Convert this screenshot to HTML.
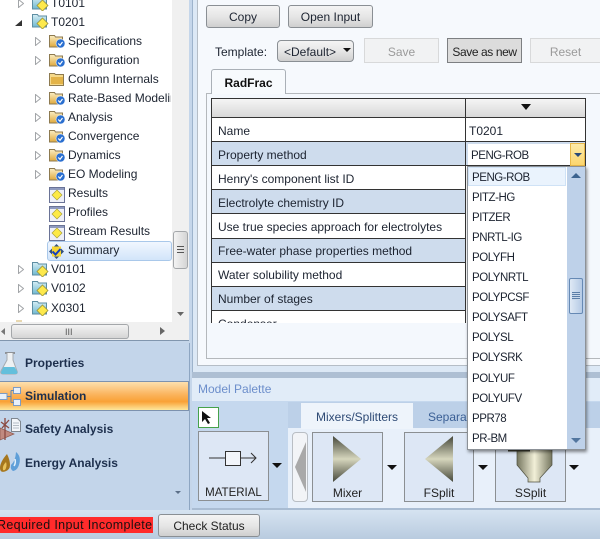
<!DOCTYPE html>
<html><head><meta charset="utf-8"><style>
html,body{margin:0;padding:0}
body{width:600px;height:539px;overflow:hidden;position:relative;background:#c5d6ea;font-family:"Liberation Sans",sans-serif;font-size:12px;color:#1c2330}
div,span,svg{position:absolute;box-sizing:border-box}
.t{white-space:nowrap;line-height:16px;height:16px}
.btn{border:1px solid #8a8f94;border-radius:3px;background:linear-gradient(#f4f4f4,#e6e6e6 50%,#cfcfcf);text-align:center;line-height:22px;height:23px}
.dis{border:1px solid #d8d9da;background:#f1f2f3;color:#9a9a9a;text-align:center;line-height:26px;height:25px}
.row{left:212px;width:253px;height:24px;border-bottom:1px solid #333;line-height:25px;padding-left:6px;white-space:nowrap}
.b{background:#cedced}
.w{background:#fff}
.it{left:472px;width:92px;height:20px;line-height:22px;white-space:nowrap;font-size:11.500px;letter-spacing:-.45px}
.nav{left:25px;font-weight:bold;color:#1d2f4d;line-height:16px;white-space:nowrap}
.pal{background:#dde7f5;border:1px solid #8b8f92;height:70px;text-align:center;color:#222}
</style></head><body>
<svg width="0" height="0" style="left:0;top:0"><defs>
<linearGradient id="fo" x1="0" x2="0" y1="0" y2="1"><stop offset="0" stop-color="#fbeec4"/><stop offset="1" stop-color="#dfa93c"/></linearGradient>
<linearGradient id="fb" x1="0" x2="0" y1="0" y2="1"><stop offset="0" stop-color="#d6eef5"/><stop offset="1" stop-color="#6fb8cf"/></linearGradient>
<symbol id="cf" viewBox="0 0 18 16"><path d="M.5 2.500h5l1 1.500h7v10H.5z" fill="url(#fo)" stroke="#8d7a50"/><circle cx="11.500" cy="10.500" r="4.500" fill="#2a6fd0" stroke="#fff" stroke-width=".5"/><path d="M9.300 10.500l1.700 1.800 2.500-3.300" stroke="#fff" stroke-width="1.200" fill="none"/></symbol>
<symbol id="bf" viewBox="0 0 18 16"><path d="M.5 1.500h5l1 1.500h8v11H.5z" fill="url(#fb)" stroke="#5e8ea3"/><path d="M10.500 5l5.500 5.500-5.500 5.500-5.500-5.500z" fill="#fde94c" stroke="#9b9439" stroke-width=".8"/></symbol>
<symbol id="dc" viewBox="0 0 16 16"><rect x=".5" y=".5" width="15" height="15" fill="#eef0f8" stroke="#6a7396"/><rect x="1" y="1" width="14" height="2" fill="#8f9bc0"/><path d="M8 3l5 5-5 5-5-5z" fill="#fdea45" stroke="#aaa23a" stroke-width=".7"/></symbol>
<symbol id="tri" viewBox="0 0 6 9"><path d="M.5.5L5.500 4.500.5 8.500z" fill="#fff" stroke="#a2a5a8"/></symbol>
</defs></svg>

<!-- tree -->
<div style="left:0;top:0;width:189px;height:341px;background:#fff;border-bottom:2px solid #8196ae;border-right:1px solid #8196ae"></div>
<div style="left:172px;top:0;width:17px;height:340px;background:#f0f0f0"></div>
<div style="left:0;top:322px;width:189px;height:18px;background:#f0f0f0"></div>
<div style="left:173px;top:231px;width:15px;height:38px;border:1px solid #a4a7aa;border-radius:3px;background:linear-gradient(90deg,#f3f3f3,#d5d5d5)"></div>
<div style="left:177px;top:246px;width:7px;height:7px;border-top:1px solid #555;border-bottom:1px solid #555"></div>
<div style="left:177px;top:249px;width:7px;height:1px;background:#555"></div>
<svg style="left:176px;top:312px" width="9" height="5"><path d="M1 0h7L4.500 4z" fill="#666"/></svg>
<div style="left:11px;top:324px;width:118px;height:15px;border:1px solid #a4a7aa;border-radius:3px;background:linear-gradient(#f3f3f3,#d5d5d5)"></div>
<div class="t" style="left:65px;top:324px;font-size:9px;color:#555">III</div>
<svg style="left:1px;top:328px" width="5" height="8"><path d="M4 0v7L0 3.500z" fill="#777"/></svg>
<svg style="left:160px;top:327px" width="5" height="8"><path d="M0 0v8l5-4z" fill="#666"/></svg>
<div style="left:47px;top:241px;width:125px;height:20px;border:1px solid #a9c8ea;border-radius:3px;background:linear-gradient(#f1f7fe,#d2e5fa)"></div>

<svg style="left:18px;top:-1px" width="6" height="9"><use href="#tri"/></svg><svg style="left:32px;top:-5px" width="18" height="16"><use href="#bf"/></svg><div class="t" style="left:51px;top:-5px">T0101</div>
<svg style="left:15px;top:20px" width="8" height="6"><path d="M7 0v6H0z" fill="#333"/></svg><svg style="left:32px;top:13px" width="18" height="16"><use href="#bf"/></svg><div class="t" style="left:51px;top:14px">T0201</div>

<svg style="left:35px;top:37px" width="6" height="9"><use href="#tri"/></svg><svg style="left:49px;top:33px" width="18" height="16"><use href="#cf"/></svg><div class="t" style="left:68px;top:33px">Specifications</div>
<svg style="left:35px;top:56px" width="6" height="9"><use href="#tri"/></svg><svg style="left:49px;top:52px" width="18" height="16"><use href="#cf"/></svg><div class="t" style="left:68px;top:52px">Configuration</div>
<svg style="left:49px;top:72px" width="16" height="15"><path d="M.5 1.500h5l1 1h8v11H.5z" fill="#f5d98a" stroke="#8d7a50"/><path d="M2 5h12v7H2z" fill="#e3b348"/></svg><div class="t" style="left:68px;top:71px">Column Internals</div>
<svg style="left:35px;top:94px" width="6" height="9"><use href="#tri"/></svg><svg style="left:49px;top:90px" width="18" height="16"><use href="#cf"/></svg><div class="t" style="left:68px;top:90px;width:103px;overflow:hidden">Rate-Based Modeling</div>
<svg style="left:35px;top:113px" width="6" height="9"><use href="#tri"/></svg><svg style="left:49px;top:109px" width="18" height="16"><use href="#cf"/></svg><div class="t" style="left:68px;top:109px">Analysis</div>
<svg style="left:35px;top:132px" width="6" height="9"><use href="#tri"/></svg><svg style="left:49px;top:128px" width="18" height="16"><use href="#cf"/></svg><div class="t" style="left:68px;top:128px">Convergence</div>
<svg style="left:35px;top:151px" width="6" height="9"><use href="#tri"/></svg><svg style="left:49px;top:147px" width="18" height="16"><use href="#cf"/></svg><div class="t" style="left:68px;top:147px">Dynamics</div>
<svg style="left:35px;top:170px" width="6" height="9"><use href="#tri"/></svg><svg style="left:49px;top:166px" width="18" height="16"><use href="#cf"/></svg><div class="t" style="left:68px;top:166px">EO Modeling</div>
<svg style="left:49px;top:187px" width="16" height="16"><use href="#dc"/></svg><div class="t" style="left:68px;top:185px">Results</div>
<svg style="left:49px;top:206px" width="16" height="16"><use href="#dc"/></svg><div class="t" style="left:68px;top:204px">Profiles</div>
<svg style="left:49px;top:225px" width="16" height="16"><use href="#dc"/></svg><div class="t" style="left:68px;top:223px">Stream Results</div>
<svg style="left:49px;top:244px" width="16" height="16"><path d="M7.500 0l7.500 7.500-7.500 7.500L0 7.500z" fill="#33517f"/><rect x="3" y="2.500" width="9" height="10" fill="#f6d533"/><path d="M3.500 7.500l3 3 5-5.500" stroke="#1540c0" stroke-width="2" fill="none"/></svg><div class="t" style="left:68px;top:242px">Summary</div>
<svg style="left:18px;top:265px" width="6" height="9"><use href="#tri"/></svg><svg style="left:32px;top:261px" width="18" height="16"><use href="#bf"/></svg><div class="t" style="left:51px;top:261px">V0101</div>
<svg style="left:18px;top:284px" width="6" height="9"><use href="#tri"/></svg><svg style="left:32px;top:280px" width="18" height="16"><use href="#bf"/></svg><div class="t" style="left:51px;top:280px">V0102</div>
<svg style="left:18px;top:304px" width="6" height="9"><use href="#tri"/></svg><svg style="left:32px;top:300px" width="18" height="16"><use href="#bf"/></svg><div class="t" style="left:51px;top:300px">X0301</div>
<div style="left:16px;top:320px;width:6px;height:2px;background:#e8d8b0"></div>

<!-- nav -->
<div style="left:0;top:343px;width:190px;height:167px;background:#c3d5ea;border-right:1px solid #8ea6c2"></div>
<svg style="left:0;top:351px" width="20" height="24"><path d="M5 2h10" stroke="#8e9297" stroke-width="2"/><path d="M7 2v7L1 20q-1 3 2 3h12q3 0 2-3L13 9V2" fill="#eef1f3" stroke="#a6abb0"/><path d="M3.500 16h11l3 5q0 2-2 2H3q-2 0-2-2z" fill="#63bfdc"/></svg>
<div class="nav" style="left:25px;top:355px">Properties</div>
<div style="left:0;top:381px;width:189px;height:30px;background:linear-gradient(#fde0ae,#fbb35c 45%,#f9a136 70%,#fde79c);border:1px solid #7d92ae;border-left:0"></div>
<svg style="left:0;top:387px" width="22" height="20"><rect x="-2" y="6.500" width="9" height="6" fill="#e8f0fa" stroke="#7d9cc4"/><rect x="13.500" y=".5" width="7" height="6" fill="#e8f0fa" stroke="#7d9cc4"/><rect x="13.500" y="12.500" width="7" height="6" fill="#e8f0fa" stroke="#7d9cc4"/><path d="M7 9.500h4M11 3.500h3M11 15.500h3M11 3.500v12" stroke="#5f86b5" fill="none"/></svg>
<div class="nav" style="left:25px;top:388px">Simulation</div>
<svg style="left:0;top:417px" width="23" height="24"><path d="M11.500 1.500h6l3 3v10h-9z" fill="#f4f6fa" stroke="#7f8790"/><path d="M13 6h6M13 8.500h6M13 11h6" stroke="#b5bcc5"/><path d="M0 11l14 6L0 23z" fill="#c08a80" stroke="#8f5a50" stroke-width=".7"/><path d="M5 1v22M1 5l8 6M9 3l-7 8" stroke="#8a4a42" stroke-width="1.300" fill="none"/></svg>
<div class="nav" style="left:25px;top:421px">Safety Analysis</div>
<svg style="left:0;top:452px" width="21" height="21"><path d="M7 2q3 6 3 11t-5 6.500-5-3.500q0-6 7-14z" fill="#a6771e"/><path d="M6 10q1 3 0 6t-3 2q-1-4 3-8z" fill="#e8c25c"/><path d="M16 0q5 4 3.500 11t-6 8q-3.500-1-2.500-6 4.500-4 5-13z" fill="#5f9fd8"/><path d="M15 7q1 4-1 7" stroke="#e2f0fb" stroke-width="1.500" fill="none"/></svg>
<div class="nav" style="left:25px;top:455px">Energy Analysis</div>
<svg style="left:175px;top:491px" width="7" height="4"><path d="M0 0h6L3 3z" fill="#5c6f88"/></svg>

<!-- status -->
<div style="left:0;top:510px;width:600px;height:29px;background:linear-gradient(#d6e3f1,#b9cbdf)"></div>
<div class="t" style="left:0;top:517px;width:153px;height:16px;background:#ff2b2b;color:#1a1010;font-size:12.500px;letter-spacing:.35px;text-indent:-3px;overflow:hidden">Required Input Incomplete</div>
<div class="btn" style="left:158px;top:514px;width:102px;height:23px;color:#222">Check Status</div>

<!-- right form -->
<div style="left:192px;top:0;width:408px;height:372px;background:#dce8f5;border-left:1px solid #9db3cc"></div>
<div style="left:197px;top:0;width:403px;height:366px;background:#f6f9fd;border:1px solid #b5bdc6;border-top:0;border-right:0"></div>
<div class="btn" style="left:206px;top:5px;width:74px;height:23px">Copy</div>
<div class="btn" style="left:288px;top:5px;width:85px;height:23px">Open Input</div>
<div class="t" style="left:215px;top:44px">Template:</div>
<div class="btn" style="left:277px;top:40px;width:77px;height:22px;text-align:left;padding-left:6px;line-height:22px;border-radius:4px">&lt;Default&gt;</div>
<svg style="left:343px;top:48px" width="8" height="5"><path d="M0 0h8L4 4z" fill="#111"/></svg>
<div class="dis" style="left:364px;top:38px;width:75px">Save</div>
<div class="dis" style="left:447px;top:38px;width:75px;background:#dcdcdc;border-color:#7d7f82;color:#222;letter-spacing:-.4px">Save as new</div>
<div class="dis" style="left:530px;top:38px;width:70px;border-right:0">Reset</div>
<div style="left:206px;top:93px;width:394px;height:266px;border:1px solid #b4b8bc;border-right:0;background:#f4f8fd"></div>
<div style="left:211px;top:69px;width:75px;height:25px;background:#f7fafd;border:1px solid #aab0b7;border-bottom:0;border-radius:3px 3px 0 0;font-weight:bold;text-align:center;line-height:27px;color:#111;font-size:12px">RadFrac</div>

<!-- grid -->
<div style="left:211px;top:98px;width:375px;height:226px;background:#fff;border:1px solid #333;border-bottom:0;overflow:hidden"></div>
<div style="left:212px;top:99px;width:253px;height:19px;background:linear-gradient(#f5f5f5,#d8d8d8);border-bottom:1px solid #333"></div>
<div style="left:466px;top:99px;width:119px;height:19px;background:linear-gradient(#f5f5f5,#d8d8d8);border-bottom:1px solid #333"></div>
<svg style="left:521px;top:104px" width="10" height="7"><path d="M0 0h10L5 6z" fill="#111"/></svg>
<div class="row w" style="top:118px;line-height:27px">Name</div>
<div class="row b" style="top:142px;line-height:27px">Property method</div>
<div class="row w" style="top:166px;line-height:27px">Henry's component list ID</div>
<div class="row b" style="top:190px;line-height:27px">Electrolyte chemistry ID</div>
<div class="row w" style="top:214px;height:25px;line-height:27px">Use true species approach for electrolytes</div>
<div class="row b" style="top:239px">Free-water phase properties method</div>
<div class="row w" style="top:263px">Water solubility method</div>
<div class="row b" style="top:287px">Number of stages</div>
<div style="left:212px;top:311px;width:253px;height:12px;background:#fff;overflow:hidden;padding-left:6px;line-height:26px">Condenser</div>
<div style="left:465px;top:99px;width:1px;height:224px;background:#333"></div>
<div style="left:466px;top:118px;width:119px;height:24px;background:#fff;border-bottom:1px solid #333;padding-left:3px;line-height:27px">T0201</div>
<div style="left:466px;top:142px;width:119px;height:24px;background:#cedced;border-bottom:1px solid #333"></div>
<div style="left:468px;top:144px;width:102px;height:21px;background:#fff;padding-left:3px;line-height:25px;font-size:11.500px;letter-spacing:-.45px">PENG-ROB</div>
<div style="left:570px;top:143px;width:15px;height:23px;background:linear-gradient(#fdeaa8,#fcd66e);border:1px solid #e8b84a"></div>
<svg style="left:574px;top:153px" width="8" height="4"><path d="M0 0h8L4 4z" fill="#2a4a78"/></svg>
<div style="left:211px;top:323px;width:255px;height:35px;background:#f4f8fd"></div>

<!-- palette -->
<div style="left:192px;top:372px;width:408px;height:6px;background:#aebfd3"></div>
<div style="left:192px;top:378px;width:408px;height:132px;background:#c5d8ee;border-bottom:2px solid #a9bcd2"></div>
<div style="left:192px;top:378px;width:408px;height:23px;background:#e1ecf8"></div>
<div class="t" style="left:198px;top:381px;color:#6c8ecb">Model Palette</div>
<div style="left:198px;top:407px;width:21px;height:21px;background:#fff;border:1px solid #46a24a"></div>
<svg style="left:201px;top:410px" width="14" height="15"><path d="M1 1v11l3-3 3 5 2-1-3-5h4z" fill="#111"/></svg>
<div class="pal" style="left:198px;top:431px;width:71px;padding-top:52px;line-height:18px;font-size:11.500px">MATERIAL</div>
<svg style="left:209px;top:449px" width="48" height="20"><path d="M0 9h16M31 9h16M42 4l5 5-5 5" stroke="#333" fill="none"/><rect x="16.500" y="2.500" width="15" height="14" fill="#f2f5fa" stroke="#333"/></svg>
<svg style="left:272px;top:463px" width="10" height="6"><path d="M0 0h10L5 5z" fill="#111"/></svg>
<div style="left:288px;top:402px;width:312px;height:106px;background:#bcd0e8"></div>
<div style="left:288px;top:428px;width:312px;height:80px;background:#e8f0fa"></div>
<div style="left:301px;top:403px;width:112px;height:26px;background:#eef4fb;text-align:center;line-height:28px;color:#2e4a75">Mixers/Splitters</div>
<div class="t" style="left:428px;top:409px;color:#3a5f95">Separators</div>
<div style="left:292px;top:432px;width:16px;height:70px;background:#f2f4f7;border:1px solid #b9bec4;border-radius:4px"></div>
<svg style="left:295px;top:442px" width="11" height="50"><path d="M11 0v50L0 25z" fill="#a9a9a9"/></svg>
<div class="pal" style="left:312px;top:432px;width:71px;padding-top:52px;line-height:17px">Mixer</div>
<svg style="left:332px;top:435px" width="30" height="48"><defs><linearGradient id="m" x1="0" x2="0" y1="0" y2="1"><stop offset="0" stop-color="#45473a"/><stop offset=".5" stop-color="#d6d6bd"/><stop offset="1" stop-color="#45473a"/></linearGradient><linearGradient id="s" x1="0" x2="1" y1="0" y2="0"><stop offset="0" stop-color="#75765f"/><stop offset=".5" stop-color="#f2f0d8"/><stop offset="1" stop-color="#75765f"/></linearGradient></defs><path d="M1 1v46l28-23z" fill="url(#m)"/></svg>
<svg style="left:387px;top:465px" width="10" height="6"><path d="M0 0h10L5 5z" fill="#111"/></svg>
<div class="pal" style="left:404px;top:432px;width:70px;padding-top:52px;line-height:17px">FSplit</div>
<svg style="left:424px;top:435px" width="30" height="48"><path d="M29 1v46L1 24z" fill="url(#m)"/></svg>
<svg style="left:478px;top:465px" width="10" height="6"><path d="M0 0h10L5 5z" fill="#111"/></svg>
<div class="pal" style="left:495px;top:432px;width:71px;padding-top:52px;line-height:17px">SSplit</div>
<svg style="left:506px;top:440px" width="48" height="44"><path d="M11 0h35v25L34 38v4H22v-4L11 25z" fill="url(#s)" stroke="#4f5040" stroke-width=".7"/><rect x="2" y="9" width="22" height="2.500" fill="#3d3e32"/></svg>
<svg style="left:569px;top:465px" width="10" height="6"><path d="M0 0h10L5 5z" fill="#111"/></svg>

<!-- dropdown -->
<div style="left:467px;top:166px;width:119px;height:284px;background:#fff;border:1px solid #8c9197;box-shadow:1px 2px 3px rgba(0,0,0,.45)"></div>
<div style="left:468px;top:167px;width:98px;height:19px;background:#eaf3fd;border:1px solid #cfe2f6"></div>
<div style="left:567px;top:167px;width:18px;height:282px;background:#bed1e9"></div>
<svg style="left:571px;top:173px" width="10" height="6"><path d="M0 5h10L5 0z" fill="#3c638f"/></svg>
<svg style="left:571px;top:438px" width="10" height="6"><path d="M0 0h10L5 5z" fill="#52769f"/></svg>
<div style="left:569px;top:278px;width:14px;height:36px;border:1px solid #6689b4;border-radius:2px;background:linear-gradient(90deg,#dfe9f5,#b5cae5)"></div>
<div style="left:572px;top:292px;width:8px;height:8px;background:repeating-linear-gradient(#5b7ea8 0 1px,#c9d8ea 1px 2px)"></div>
<div class="it" style="top:167px">PENG-ROB</div>
<div class="it" style="top:187px">PITZ-HG</div>
<div class="it" style="top:207px">PITZER</div>
<div class="it" style="top:227px">PNRTL-IG</div>
<div class="it" style="top:247px">POLYFH</div>
<div class="it" style="top:267px">POLYNRTL</div>
<div class="it" style="top:287px">POLYPCSF</div>
<div class="it" style="top:307px">POLYSAFT</div>
<div class="it" style="top:327px">POLYSL</div>
<div class="it" style="top:347px">POLYSRK</div>
<div class="it" style="top:368px">POLYUF</div>
<div class="it" style="top:388px">POLYUFV</div>
<div class="it" style="top:408px">PPR78</div>
<div class="it" style="top:428px">PR-BM</div>
</body></html>
